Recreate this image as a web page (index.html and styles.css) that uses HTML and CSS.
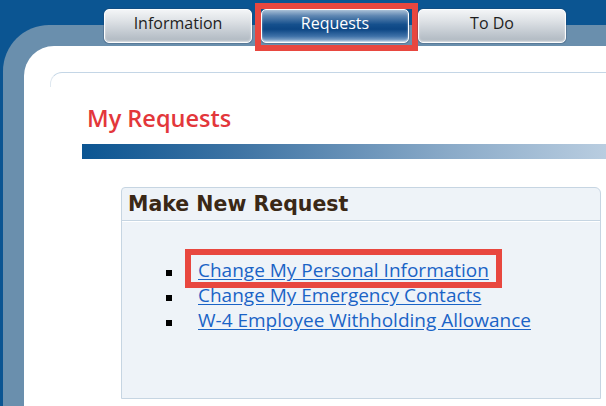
FILE: index.html
```html
<!DOCTYPE html>
<html>
<head>
<meta charset="utf-8">
<link rel="stylesheet" href="styles.css">
</head>
<body>
<div class="page">
  <nav class="tabs">
    <a class="tab">Information</a>
    <a class="tab active">Requests</a>
    <a class="tab">To Do</a>
  </nav>
  <div class="frame">
    <div class="panel">
      <div class="inner">
        <div class="rule"></div>
        <h1 class="title">My Requests</h1>
        <div class="bar"></div>
        <section class="box">
          <h2 class="box-head">Make New Request</h2>
          <ul class="links">
            <li><a class="link hl" href="#">Change My Personal Information</a></li>
            <li><a class="link" href="#">Change My Emergency Contacts</a></li>
            <li><a class="link" href="#">W-4 Employee Withholding Allowance</a></li>
          </ul>
        </section>
      </div>
    </div>
  </div>
</div>
</body>
</html>
```

FILE: styles.css
```css
html, body {
  margin: 0;
  padding: 0;
  height: 100%;
  overflow: hidden;
}
body {
  background: #0b5592;
  font-family: "Open Sans", "Noto Sans", sans-serif;
}
.page {
  height: 406px;
  display: flex;
  flex-direction: column;
}
.tabs {
  display: flex;
  gap: 9px;
  height: 25px;
  padding: 9px 0 0 104px;
  box-sizing: border-box;
  position: relative;
  z-index: 2;
}
.tab {
  position: relative;
  flex: 0 0 auto;
  width: 148px;
  height: 34px;
  box-sizing: border-box;
  border: 1.5px solid #fdfdfd;
  border-radius: 5px;
  box-shadow: 0 0 0 1px rgba(40, 60, 90, 0.25), inset 0 -1px 2px rgba(255,255,255,0.6);
  background: linear-gradient(#f3f5f7 0%, #dde1e5 35%, #c3cad1 70%, #aeb7c0 100%);
  color: #1e1e1e;
  font-size: 16px;
  line-height: 27px;
  text-align: center;
  cursor: pointer;
}
.tab.active {
  background: linear-gradient(#a9c0d7 0%, #5f87b2 18%, #15508d 45%, #0c4684 60%, #3e71a8 82%, #9bb8d6 100%);
  color: #fff;
}
.tab.active::after {
  content: "";
  position: absolute;
  top: -7px;
  left: -7px;
  right: -10px;
  bottom: -9px;
  border: 6px solid #e8473f;
}
.frame {
  flex: 1;
  margin-left: 3px;
  background: #6a8fad;
  border-top-left-radius: 46px;
  padding: 21px 0 0 21px;
  display: flex;
  min-height: 0;
}
.panel {
  flex: 1;
  background: #fff;
  border-top-left-radius: 30px;
  padding: 26px 0 0 26px;
  min-height: 0;
  overflow: hidden;
}
.inner {
  display: flex;
  flex-direction: column;
}
.rule {
  height: 15px;
  border-top: 1px solid #c4d6e6;
  border-left: 1px solid #dfe8f0;
  border-top-left-radius: 12px;
  box-sizing: border-box;
}
.title {
  margin: 15px 0 0 37px;
  font-size: 23.5px;
  font-weight: 600;
  line-height: 32px;
  color: #e3373b;
}
.bar {
  margin: 10px 0 0 32px;
  height: 15px;
  background: linear-gradient(to right, #0b5592 0%, #3f74a4 30%, #8aaac8 70%, #b9cde0 100%);
}
.box {
  margin: 28px 5px 0 71px;
  background: #eef3f8;
  border: 1px solid #c6d5e2;
  border-radius: 4px 6px 0 0;
  padding-bottom: 65px;
}
.box-head {
  margin: 0;
  padding-left: 6px;
  height: 32px;
  line-height: 32px;
  font-family: "DejaVu Sans", Verdana, sans-serif;
  font-weight: bold;
  font-size: 20.5px;
  color: #3a2816;
  border-bottom: 1px solid #c6d5e2;
  box-shadow: 0 1px 0 #fff;
}
.links {
  list-style: none;
  margin: 0;
  padding: 37px 0 0 76px;
}
.links li {
  position: relative;
  font-size: 19px;
  line-height: 25px;
}
.links li::before {
  content: "";
  position: absolute;
  left: -32px;
  top: 12px;
  width: 6px;
  height: 6px;
  background: #000;
}
.link {
  color: #1a63c6;
  text-decoration: underline;
  text-underline-offset: 2px;
}
.hl {
  position: relative;
  display: inline-block;
}
.hl::after {
  content: "";
  position: absolute;
  top: -9px;
  left: -13px;
  right: -13px;
  bottom: -5px;
  border: 6px solid #e8473f;
}
```
